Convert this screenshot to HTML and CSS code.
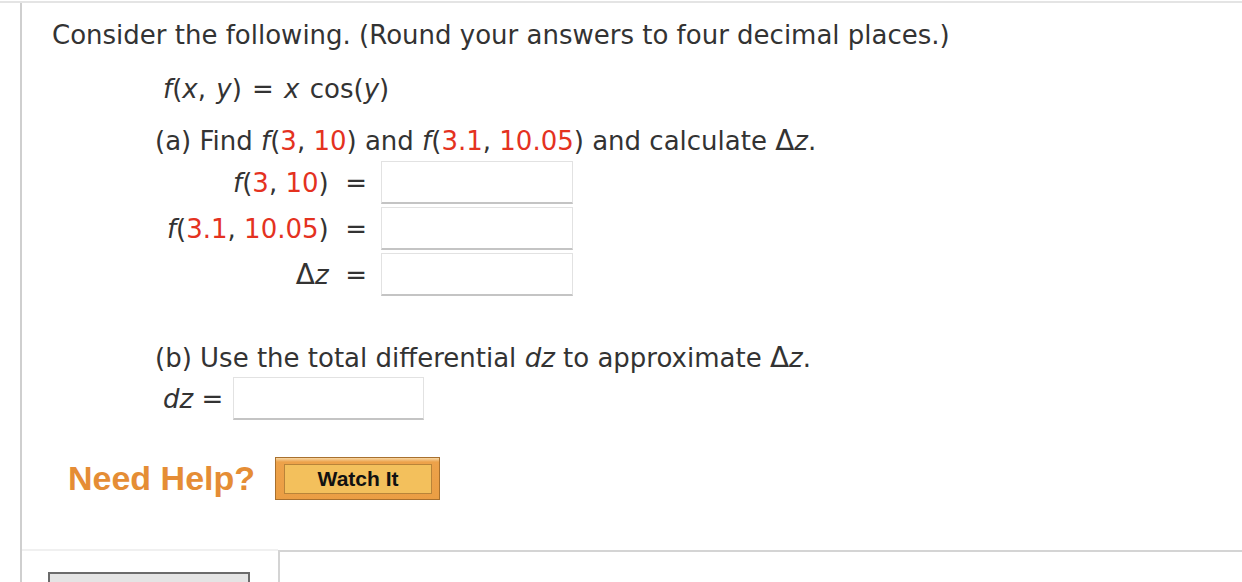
FILE: index.html
```html
<!DOCTYPE html>
<html>
<head>
<meta charset="utf-8">
<link rel="stylesheet" href="styles.css">
</head>
<body>
<div class="page">
  <div class="question">
    <div class="content">
      <p class="intro">Consider the following. (Round your answers to four decimal places.)</p>
      <div class="indent">
        <p class="eq"><i>f</i>(<i>x</i>, <i>y</i>) = <i>x</i> cos(<i>y</i>)</p>
        <p class="part">(a) Find <i>f</i>(<span class="num">3</span>, <span class="num">10</span>) and <i>f</i>(<span class="num">3.1</span>, <span class="num">10.05</span>) and calculate <span class="delta">Δ</span><i>z</i>.</p>
        <div class="answers">
          <div class="label"><i>f</i>(<span class="num">3</span>, <span class="num">10</span>) &nbsp;=</div>
          <div class="box"></div>
          <div class="label"><i>f</i>(<span class="num">3.1</span>, <span class="num">10.05</span>) &nbsp;=</div>
          <div class="box"></div>
          <div class="label"><span class="delta">Δ</span><i>z</i> &nbsp;=</div>
          <div class="box"></div>
        </div>
        <p class="part partb">(b) Use the total differential <i>dz</i> to approximate <span class="delta">Δ</span><i>z</i>.</p>
        <div class="dzrow">
          <span class="dzlabel"><i>dz</i> =</span>
          <div class="box"></div>
        </div>
      </div>
      <div class="help">
        <span class="needhelp">Need Help?</span>
        <span class="watch"><span class="watch-inner">Watch It</span></span>
      </div>
    </div>
    <div class="footer">
      <div class="foot-left"><div class="foot-btn"></div></div>
      <div class="foot-right"></div>
    </div>
  </div>
</div>
</body>
</html>
```
FILE: styles.css
```css
html, body {
  margin: 0;
  padding: 0;
  background: #fff;
  overflow: hidden;
}
body {
  font-family: "DejaVu Sans", Verdana, sans-serif;
  font-size: 26px;
  color: #333;
}
.page {
  border-top: 2px solid #e4e4e4;
  margin-top: 1px;
  height: 581px;
  box-sizing: border-box;
}
.question {
  margin-left: 20px;
  border-left: 2px solid #cfcfcf;
  height: 100%;
  display: flex;
  flex-direction: column;
}
.content {
  padding: 17px 0 0 30px;
  height: 546px;
  flex: none;
  box-sizing: border-box;
}
p { margin: 0; }
.intro {
  line-height: 30px;
}
.indent {
  padding-left: 103px;
}
.eq {
  margin-top: 24px;
  margin-left: 8px;
  line-height: 30px;
  word-spacing: 2px;
}
.part {
  margin-top: 22px;
  line-height: 30px;
}
.num { color: #e4321f; }
.delta { font-size: 28px; }
.answers {
  margin-top: 5px;
  display: grid;
  grid-template-columns: 226px 192px;
  row-gap: 3px;
  align-items: center;
}
.label {
  text-align: right;
  padding-right: 14px;
  line-height: 30px;
}
.box {
  height: 43px;
  border: 1px solid #e2e2e2;
  border-bottom: 2px solid #c4c4c4;
  box-sizing: border-box;
  background: #fff;
}
.partb {
  margin-top: 47px;
}
.dzrow {
  margin-top: 4px;
  display: flex;
  align-items: center;
  padding-left: 8px;
}
.dzlabel {
  width: 70px;
  line-height: 30px;
}
.dzrow .box {
  width: 191px;
  height: 43px;
}
.help {
  margin-top: 37px;
  margin-left: 16px;
  display: flex;
  align-items: center;
}
.needhelp {
  font-family: "Liberation Sans", Arial, sans-serif;
  font-weight: bold;
  font-size: 34px;
  color: #e58d35;
  margin-right: 20px;
}
.watch {
  display: flex;
  width: 165px;
  height: 43px;
  box-sizing: border-box;
  border: 1px solid #a8702e;
  background: linear-gradient(#f7d7a5 0, #eda24a 4px, #eb9e44 100%);
  padding: 6px 7px 5px 8px;
}
.watch-inner {
  flex: 1;
  display: flex;
  align-items: center;
  justify-content: center;
  border: 1px solid #b98439;
  background: #f3c05c;
  font-family: "Liberation Sans", Arial, sans-serif;
  font-weight: bold;
  font-size: 21px;
  color: #111;
}
.footer {
  display: flex;
  flex: 1;
  min-height: 0;
  overflow: hidden;
}
.foot-left {
  width: 256px;
  border-top: 2px solid #f0f0f0;
  padding: 21px 0 0 26px;
  box-sizing: border-box;
}
.foot-btn {
  width: 202px;
  height: 12px;
  box-sizing: border-box;
  border: 2px solid #6b6b6b;
  border-bottom: none;
  background: #e4e4e4;
}
.foot-right {
  flex: 1;
  margin-top: 1px;
  border-top: 2px solid #d4d4d4;
  border-left: 2px solid #d4d4d4;
}
```
